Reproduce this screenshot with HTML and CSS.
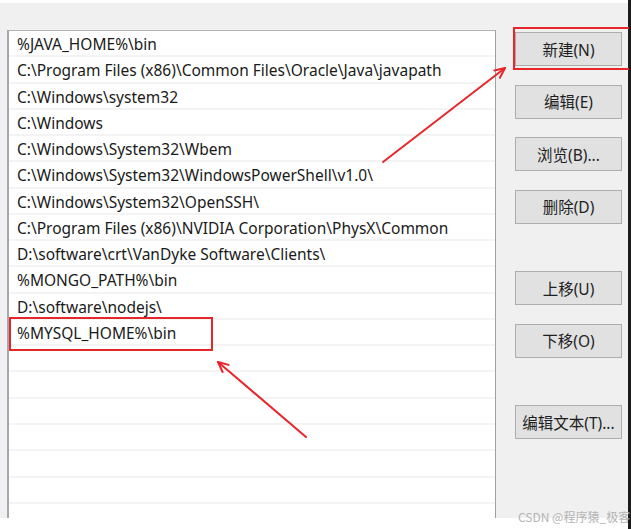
FILE: index.html
```html
<!DOCTYPE html>
<html lang="zh-CN">
<head>
<meta charset="utf-8">
<title>编辑环境变量</title>
<link rel="stylesheet" href="styles.css">
</head>
<body>
<div class="screen">
  <div class="dialog">
    <div class="list">
      <div class="row">%JAVA_HOME%\bin</div>
      <div class="row">C:\Program Files (x86)\Common Files\Oracle\Java\javapath</div>
      <div class="row">C:\Windows\system32</div>
      <div class="row">C:\Windows</div>
      <div class="row">C:\Windows\System32\Wbem</div>
      <div class="row">C:\Windows\System32\WindowsPowerShell\v1.0\</div>
      <div class="row">C:\Windows\System32\OpenSSH\</div>
      <div class="row">C:\Program Files (x86)\NVIDIA Corporation\PhysX\Common</div>
      <div class="row">D:\software\crt\VanDyke Software\Clients\</div>
      <div class="row">%MONGO_PATH%\bin</div>
      <div class="row">D:\software\nodejs\</div>
      <div class="row">%MYSQL_HOME%\bin</div>
      <div class="row"></div>
      <div class="row"></div>
      <div class="row"></div>
      <div class="row"></div>
      <div class="row"></div>
      <div class="row"></div>
      <div class="row"></div>
    </div>
    <div class="buttons">
      <button class="btn">新建(N)</button>
      <button class="btn">编辑(E)</button>
      <button class="btn">浏览(B)...</button>
      <button class="btn">删除(D)</button>
      <button class="btn btn-sep">上移(U)</button>
      <button class="btn">下移(O)</button>
      <button class="btn btn-sep">编辑文本(T)...</button>
    </div>
  </div>
  <div class="edge"></div>

  <div class="mark mark-new"></div>
  <div class="mark mark-mysql"></div>
  <svg class="arrows" width="631" height="529" viewBox="0 0 631 529">
    <g fill="none" stroke="#e8262a" stroke-width="2" stroke-linecap="round" stroke-linejoin="round">
      <line x1="383" y1="162" x2="505" y2="68"/>
      <polyline points="494.3,70.4 505,68 499.9,77.8"/>
      <line x1="306" y1="437" x2="218" y2="362"/>
      <polyline points="222.6,372 218,362 228.6,364.9"/>
    </g>
  </svg>
  <div class="watermark">CSDN @程序猿_极客</div>
</div>
</body>
</html>
```

FILE: styles.css
```css
html, body {
  margin: 0;
  padding: 0;
  background: #ffffff;
}

.screen {
  position: relative;
  width: 631px;
  height: 529px;
  display: flex;
  overflow: hidden;
  font-family: "Noto Sans", "Noto Sans CJK SC", sans-serif;
}

.dialog {
  width: 628px;
  height: 515px;
  margin-top: 3px;
  box-sizing: border-box;
  background: #f0f0f0;
  padding: 27px 0 0 7px;
  display: flex;
  align-items: flex-start;
}

.edge {
  width: 3px;
  height: 529px;
  background: #1c1c1c;
}

.list {
  width: 489px;
  align-self: stretch;
  box-sizing: border-box;
  background: #ffffff;
  border-top: 1px solid #b4b4b4;
  border-left: 2px solid #a6a6ae;
  border-right: 1px solid #a0a0a0;
  overflow: hidden;
}

.row {
  height: 26.28px;
  box-sizing: border-box;
  border-bottom: 2px solid #f3f3f3;
  padding-left: 8px;
  font-size: 15.5px;
  line-height: 26px;
  color: #1a1a1a;
  white-space: nowrap;
}

.buttons {
  margin-left: 19px;
  margin-top: 2px;
  display: flex;
  flex-direction: column;
  gap: 18.5px;
}

.btn {
  width: 107px;
  height: 34px;
  box-sizing: border-box;
  background: #e1e1e1;
  border: 1px solid #adadad;
  border-radius: 0;
  font-family: "Noto Sans", "Noto Sans CJK SC", sans-serif;
  font-size: 15.5px;
  color: #1e1e1e;
  padding: 0;
}

.btn-sep {
  margin-top: 29px;
}

.mark {
  position: absolute;
  border: 2px solid #e8262a;
  box-sizing: border-box;
}

.mark-new {
  left: 513px;
  top: 27px;
  width: 116px;
  height: 43px;
  border-right: none;
}

.mark-mysql {
  left: 9px;
  top: 317px;
  width: 204px;
  height: 34px;
}

.arrows {
  position: absolute;
  left: 0;
  top: 0;
}

.watermark {
  position: absolute;
  left: 518px;
  top: 509px;
  font-size: 12px;
  line-height: 15px;
  color: #b4b4b4;
  white-space: nowrap;
  font-family: "Noto Sans CJK SC", sans-serif;
}
```
